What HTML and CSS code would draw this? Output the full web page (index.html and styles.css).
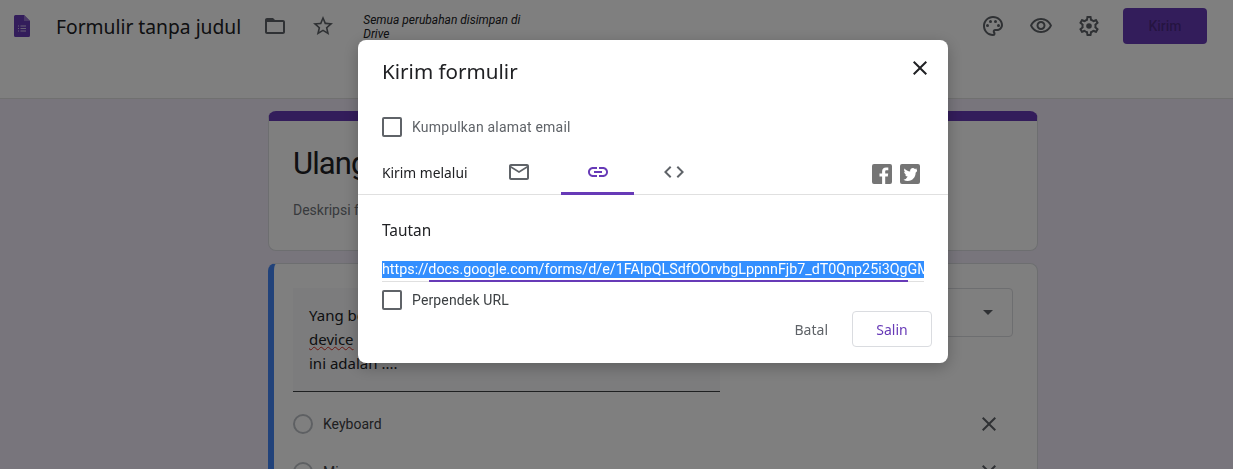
FILE: index.html
```html
<!DOCTYPE html>
<html lang="id">
<head>
    <meta charset="UTF-8">
    <title>Formulir tanpa judul</title>
    <link rel="stylesheet" href="styles.css">
</head>
<body>
    <header class="topbar">
        <svg class="forms-logo" viewBox="0 0 16 22">
            <path d="M1.5 0H10l6 6v14.5a1.5 1.5 0 0 1-1.5 1.5h-13A1.5 1.5 0 0 1 0 20.5v-19A1.5 1.5 0 0 1 1.5 0z" fill="#673ab7"/>
            <path d="M10 0l6 6h-6z" fill="#9575cd"/>
            <path d="M4 10.5h1v1H4zM6.5 10.5H12v1H6.5zM4 13h1v1H4zM6.5 13H12v1H6.5zM4 15.500h1v1H4zM6.5 15.500H12v1H6.500z" fill="#d1c4e9"/>
        </svg>
        <span class="doc-title">Formulir tanpa judul</span>
        <svg class="icon folder-icon" viewBox="0 0 24 24"><path d="M20 6h-8l-2-2H4c-1.100 0-2 .9-2 2v12c0 1.100.9 2 2 2h16c1.100 0 2-.9 2-2V8c0-1.100-.9-2-2-2zm0 12H4V8h16v10z"/></svg>
        <svg class="icon star-icon" viewBox="0 0 24 24"><path d="M22 9.240l-7.190-.62L12 2 9.190 8.630 2 9.240l5.460 4.730L5.820 21 12 17.270 18.180 21l-1.630-7.030L22 9.240zM12 15.400l-3.760 2.270 1-4.280-3.320-2.880 4.380-.38L12 6.100l1.710 4.040 4.380.38-3.320 2.880 1 4.280L12 15.400z"/></svg>
        <p class="save-status">Semua perubahan disimpan di Drive</p>
        <div class="topbar-actions">
            <svg class="icon" viewBox="0 0 24 24"><path d="M12 22C6.490 22 2 17.510 2 12S6.490 2 12 2s10 4.040 10 9c0 3.310-2.690 6-6 6h-1.770c-.28 0-.5.22-.5.5 0 .12.05.23.13.33.41.47.64 1.060.64 1.670A2.500 2.500 0 0 1 12 22zm0-18c-4.410 0-8 3.590-8 8s3.590 8 8 8c.28 0 .5-.22.5-.5a.54.54 0 0 0-.14-.35c-.41-.46-.63-1.050-.63-1.650a2.500 2.500 0 0 1 2.500-2.500H16c2.210 0 4-1.790 4-4 0-3.860-3.590-7-8-7z"/><circle cx="6.500" cy="11.500" r="1.500"/><circle cx="9.500" cy="7.500" r="1.500"/><circle cx="14.500" cy="7.500" r="1.500"/><circle cx="17.500" cy="11.500" r="1.500"/></svg>
            <svg class="icon" viewBox="0 0 24 24"><path d="M12 6c3.790 0 7.170 2.130 8.820 5.500C19.170 14.870 15.790 17 12 17s-7.170-2.130-8.820-5.500C4.830 8.130 8.210 6 12 6m0-2C7 4 2.730 7.110 1 11.500 2.730 15.890 7 19 12 19s9.270-3.110 11-7.500C21.270 7.110 17 4 12 4zm0 5c1.380 0 2.500 1.120 2.500 2.500S13.380 14 12 14s-2.500-1.120-2.500-2.500S10.620 9 12 9m0-2c-2.480 0-4.500 2.020-4.500 4.500S9.520 16 12 16s4.500-2.020 4.500-4.500S14.480 7 12 7z"/></svg>
            <svg class="icon" viewBox="0 0 24 24"><path d="M19.430 12.980c.04-.32.07-.64.07-.98 0-.34-.03-.66-.07-.98l2.110-1.650c.19-.15.24-.42.12-.64l-2-3.460c-.09-.16-.26-.25-.44-.25-.06 0-.12.01-.17.03l-2.490 1c-.52-.4-1.080-.73-1.690-.98l-.38-2.650C14.460 2.180 14.250 2 14 2h-4c-.25 0-.46.18-.49.42l-.38 2.650c-.61.25-1.170.59-1.690.98l-2.490-1c-.06-.02-.12-.03-.18-.03-.17 0-.34.09-.43.25l-2 3.460c-.13.22-.07.49.12.64l2.110 1.650c-.04.32-.07.65-.07.98 0 .33.03.66.07.98l-2.110 1.650c-.19.15-.24.42-.12.64l2 3.460c.09.16.26.25.44.25.06 0 .12-.01.17-.03l2.490-1c.52.4 1.080.73 1.690.98l.38 2.650c.03.24.24.42.49.42h4c.25 0 .46-.18.49-.42l.38-2.650c.61-.25 1.170-.59 1.690-.98l2.490 1c.06.02.12.03.18.03.17 0 .34-.09.43-.25l2-3.460c.12-.22.07-.49-.12-.64l-2.110-1.650zm-1.980-1.710c.04.31.05.52.05.73 0 .21-.02.43-.05.73l-.14 1.130.89.7 1.080.84-.7 1.210-1.270-.51-1.040-.42-.9.68c-.43.32-.84.56-1.250.73l-1.060.43-.16 1.130-.2 1.350h-1.400l-.19-1.350-.16-1.130-1.060-.43c-.43-.18-.83-.41-1.230-.71l-.91-.7-1.060.43-1.270.51-.7-1.210 1.080-.84.89-.7-.14-1.130c-.03-.31-.05-.54-.05-.74s.02-.43.05-.73l.14-1.130-.89-.7-1.080-.84.7-1.210 1.270.51 1.040.42.9-.68c.43-.32.84-.56 1.250-.73l1.060-.43.16-1.130.2-1.350h1.390l.19 1.350.16 1.130 1.060.43c.43.18.83.41 1.230.71l.91.7 1.060-.43 1.270-.51.7 1.210-1.070.85-.89.7.14 1.130z"/><circle cx="12" cy="12" r="2.800"/></svg>
            <button class="send-btn">Kirim</button>
        </div>
    </header>

    <main class="form-area">
        <section class="card title-card">
            <h1>Ulangan</h1>
            <p>Deskripsi formulir</p>
        </section>
        <section class="card question-card">
            <div class="question-top">
                <div class="question-text">
                    Yang berfungsi sebagai input<br>
                    <span class="misspelled">device</span> pada komputer<br>
                    ini adalah ....
                </div>
                <div class="type-select">
                    <span class="caret"></span>
                </div>
            </div>
            <div class="option"><span class="radio"></span><span class="option-label">Keyboard</span>
                <svg class="icon" viewBox="0 0 24 24"><path d="M19 6.410L17.590 5 12 10.590 6.410 5 5 6.410 10.590 12 5 17.590 6.410 19 12 13.410 17.590 19 19 17.590 13.410 12z"/></svg>
            </div>
            <div class="option"><span class="radio"></span><span class="option-label">Mic</span>
                <svg class="icon" viewBox="0 0 24 24"><path d="M19 6.410L17.590 5 12 10.590 6.410 5 5 6.410 10.590 12 5 17.590 6.410 19 12 13.410 17.590 19 19 17.590 13.410 12z"/></svg>
            </div>
        </section>
    </main>

    <div class="overlay"></div>

    <div class="dialog">
        <div class="dialog-head">
            <h2>Kirim formulir</h2>
            <svg class="close-icon" viewBox="0 0 24 24"><path d="M19 6.410L17.590 5 12 10.590 6.410 5 5 6.410 10.590 12 5 17.590 6.410 19 12 13.410 17.590 19 19 17.590 13.410 12z"/></svg>
        </div>
        <label class="check-row email-row"><span class="checkbox"></span>Kumpulkan alamat email</label>
        <div class="send-via">
            <span class="send-label">Kirim melalui</span>
            <span class="tab tab-mail">
                <svg viewBox="0 0 24 24"><path d="M20 4H4c-1.100 0-1.990.9-1.990 2L2 18c0 1.100.9 2 2 2h16c1.100 0 2-.9 2-2V6c0-1.100-.9-2-2-2zm0 14H4V8l8 5 8-5v10zm-8-7L4 6h16l-8 5z"/></svg>
            </span>
            <span class="tab tab-active">
                <svg viewBox="0 0 24 24"><path d="M3.900 12c0-1.710 1.390-3.100 3.100-3.100h4V7H7c-2.760 0-5 2.240-5 5s2.240 5 5 5h4v-1.900H7c-1.710 0-3.100-1.390-3.100-3.100zM8 13h8v-2H8v2zm9-6h-4v1.900h4c1.710 0 3.100 1.390 3.100 3.100s-1.390 3.100-3.100 3.100h-4V17h4c2.760 0 5-2.240 5-5s-2.240-5-5-5z"/></svg>
            </span>
            <span class="tab tab-code">
                <svg viewBox="0 0 24 24"><path d="M9.400 16.600L4.800 12l4.600-4.600L8 6l-6 6 6 6 1.400-1.400zm5.200 0l4.600-4.600-4.600-4.600L16 6l6 6-6 6-1.400-1.400z"/></svg>
            </span>
            <div class="share-icons">
                <svg viewBox="0 0 20 20"><path d="M2 0h16a2 2 0 0 1 2 2v16a2 2 0 0 1-2 2h-4.800v-7.600h2.600l.4-3h-3V7.600c0-.9.300-1.400 1.500-1.400h1.600V3.500c-.3 0-1.200-.1-2.300-.1-2.300 0-3.900 1.400-3.900 4v2H7.500v3h2.600V20H2a2 2 0 0 1-2-2V2a2 2 0 0 1 2-2z"/></svg>
                <svg viewBox="0 0 20 20"><path fill-rule="evenodd" d="M2 0h16a2 2 0 0 1 2 2v16a2 2 0 0 1-2 2H2a2 2 0 0 1-2-2V2a2 2 0 0 1 2-2zM17 5.300c-.5.2-1 .4-1.600.45.6-.35 1-.9 1.200-1.550-.55.3-1.100.55-1.750.7-.5-.55-1.200-.9-2-.9-1.500 0-2.750 1.250-2.750 2.750 0 .2 0 .45.1.65-2.300-.1-4.300-1.200-5.650-2.900-.25.4-.4.9-.4 1.400 0 .95.5 1.800 1.250 2.300-.45 0-.9-.15-1.250-.35 0 1.350 1 2.500 2.250 2.750-.45.1-.85.15-1.250.05.35 1.100 1.350 1.900 2.600 1.950A5.500 5.500 0 0 1 3.500 15.700a7.800 7.800 0 0 0 4.200 1.250c5.100 0 7.900-4.200 7.900-7.900v-.35c.55-.4 1-.9 1.400-1.400z"/></svg>
            </div>
        </div>
        <div class="link-panel">
            <h3>Tautan</h3>
            <div class="link-field">
                <div class="link-text"><span class="selected">https://docs.google.com/forms/d/e/1FAIpQLSdfOOrvbgLppnnFjb7_dT0Qnp25i3QgGMxyzAbCdEfG/viewform?usp=sf_link</span></div>
                <div class="link-line"></div>
            </div>
            <label class="check-row short-row"><span class="checkbox"></span>Perpendek URL</label>
        </div>
        <div class="dialog-foot">
            <button class="btn-cancel">Batal</button>
            <button class="btn-copy">Salin</button>
        </div>
    </div>
</body>
</html>
```

FILE: styles.css
```css
html, body {
    height: 469px;
    overflow: hidden;
}
body {
    margin: 0;
    background-color: #f0ebf8;
    font-family: Roboto, sans-serif;
    color: #202124;
}
svg {
    display: block;
    fill: currentColor;
}
h1, h2, h3, p {
    margin: 0;
    font-weight: 400;
}
button {
    font-family: inherit;
    cursor: pointer;
}
.icon {
    width: 24px;
    height: 24px;
    flex: none;
    color: #5f6368;
}

/* top bar */
.topbar {
    height: 99px;
    box-sizing: border-box;
    padding: 8px 26px 0 14px;
    background-color: #fff;
    border-bottom: 1px solid #e0e0e0;
    display: flex;
    align-items: flex-start;
}
.forms-logo {
    width: 16px;
    height: 22px;
    margin-top: 7px;
    flex: none;
}
.doc-title {
    margin: 5px 0 0 26px;
    font-family: "Noto Sans", sans-serif;
    font-size: 19.25px;
    line-height: 27px;
    white-space: nowrap;
}
.folder-icon {
    margin: 6px 0 0 22px;
}
.star-icon {
    margin: 6px 0 0 24px;
}
.save-status {
    width: 170px;
    margin: 5px 0 0 28px;
    font-size: 12px;
    line-height: 14px;
    font-style: italic;
}
.topbar-actions {
    margin-left: auto;
    display: flex;
    gap: 24px;
    align-items: center;
}
.send-btn {
    width: 84px;
    height: 36px;
    margin-left: -2px;
    border: none;
    border-radius: 4px;
    background-color: #673ab7;
    color: rgba(0, 0, 0, 0.3);
    font-size: 14px;
    font-weight: 500;
}

/* form behind the dialog */
.form-area {
    width: 770px;
    margin: 12px 0 0 268px;
}
.card {
    background-color: #fff;
    border: 1px solid #dadce0;
    border-radius: 8px;
    box-sizing: border-box;
}
.title-card {
    height: 140px;
    border-top: 10px solid #673ab7;
    padding: 21px 24px 0;
}
.title-card h1 {
    font-size: 31px;
    letter-spacing: -0.9px;
    line-height: 44px;
}
.title-card p {
    margin-top: 16px;
    font-size: 14px;
    color: #70757a;
}
.question-card {
    height: 400px;
    margin-top: 12px;
    padding: 24px 24px 0 19px;
    border-left: 6px solid #4285f4;
}
.question-top {
    display: flex;
    justify-content: space-between;
    align-items: flex-start;
}
.question-text {
    width: 427px;
    height: 104px;
    box-sizing: border-box;
    padding: 15px 16px;
    background-color: #f8f9fa;
    border-bottom: 1px solid #3c4043;
    font-family: "Noto Sans", sans-serif;
    font-size: 15px;
    line-height: 24px;
}
.misspelled {
    text-decoration: underline wavy #d93025 1px;
}
.type-select {
    width: 240px;
    height: 49px;
    box-sizing: border-box;
    border: 1px solid #dadce0;
    border-radius: 4px;
    display: flex;
    justify-content: flex-end;
    align-items: center;
    padding-right: 19px;
}
.caret {
    border-left: 5px solid transparent;
    border-right: 5px solid transparent;
    border-top: 5px solid #5f6368;
}
.option {
    display: flex;
    align-items: center;
    height: 48px;
}
.question-top + .option {
    margin-top: 8px;
}
.radio {
    width: 16px;
    height: 16px;
    border: 2px solid #bdc1c6;
    border-radius: 50%;
    flex: none;
}
.option-label {
    margin-left: 10px;
    font-size: 14px;
    color: #3c4043;
    flex: 1;
}
.option .icon {
    margin-right: 12px;
}

.overlay {
    position: fixed;
    inset: 0;
    background-color: rgba(0, 0, 0, 0.5);
}

/* dialog */
.dialog {
    position: fixed;
    left: 358px;
    top: 40px;
    width: 590px;
    height: 323px;
    background-color: #fff;
    border-radius: 8px;
    box-shadow: 0 4px 16px rgba(0, 0, 0, 0.25);
}
.dialog-head {
    height: 62px;
    padding: 0 16px 0 24px;
    display: flex;
    justify-content: space-between;
    align-items: center;
}
.dialog-head h2 {
    font-family: "Noto Sans", sans-serif;
    font-size: 20.6px;
}
.close-icon {
    width: 24px;
    height: 24px;
    margin-top: -6px;
}
.check-row {
    display: flex;
    align-items: center;
    gap: 10px;
    font-size: 14px;
    padding-left: 24px;
}
.email-row {
    height: 50px;
    color: #5f6368;
    letter-spacing: 0.2px;
}
.short-row {
    margin-top: 8px;
    height: 20px;
    color: #3c4043;
    letter-spacing: 0.15px;
}
.checkbox {
    width: 16px;
    height: 16px;
    border: 2px solid #5f6368;
    border-radius: 2px;
    flex: none;
}
.send-via {
    height: 43px;
    box-sizing: border-box;
    padding: 0 28px 0 24px;
    border-bottom: 1px solid #e0e0e0;
    display: flex;
    align-items: center;
}
.send-label {
    width: 125px;
    flex: none;
    margin-top: -2px;
    font-family: "Noto Sans", sans-serif;
    font-size: 13.8px;
}
.tab {
    width: 73px;
    height: 42px;
    box-sizing: border-box;
    display: flex;
    justify-content: center;
    align-items: center;
    padding-bottom: 2px;
    color: #5f6368;
}
.tab svg {
    width: 24px;
    height: 24px;
}
.tab-mail {
    width: 24px;
    margin-right: 30px;
}
.tab-active {
    color: #673ab7;
    border-bottom: 3px solid #673ab7;
    border-radius: 3px 3px 0 0;
    padding-bottom: 2px;
    align-self: flex-end;
    margin-bottom: -1px;
}
.tab-code {
    width: 24px;
    margin-left: 28px;
}
.share-icons {
    margin-left: auto;
    display: flex;
    gap: 8px;
    color: #757575;
    margin-top: 1px;
}
.share-icons svg {
    width: 20px;
    height: 20px;
}
.link-panel h3 {
    margin: 25px 0 0 24px;
    font-family: "Noto Sans", sans-serif;
    font-size: 15.4px;
    line-height: 22px;
}
.link-field {
    margin: 19px 24px 0;
}
.link-text {
    overflow: hidden;
    white-space: nowrap;
    font-size: 14.3px;
    line-height: 17px;
}
.selected {
    background-color: #338fff;
    color: #fff;
    display: inline-block;
}
.link-line {
    height: 1px;
    margin-top: 3px;
    background-color: #e0e0e0;
    position: relative;
}
.link-line::after {
    content: "";
    position: absolute;
    left: 47px;
    right: 16px;
    top: -1px;
    height: 2px;
    background-color: #673ab7;
}
.dialog-foot {
    margin-top: 1px;
    padding-right: 16px;
    display: flex;
    justify-content: flex-end;
    align-items: center;
    gap: 24px;
}
.btn-cancel {
    border: none;
    background: none;
    padding: 0;
    font-family: "Noto Sans", sans-serif;
    font-size: 14px;
    color: #5f6368;
}
.btn-copy {
    width: 80px;
    height: 36px;
    border: 1px solid #dadce0;
    border-radius: 4px;
    background-color: #fff;
    font-family: "Noto Sans", sans-serif;
    font-size: 14px;
    color: #673ab7;
}
```
